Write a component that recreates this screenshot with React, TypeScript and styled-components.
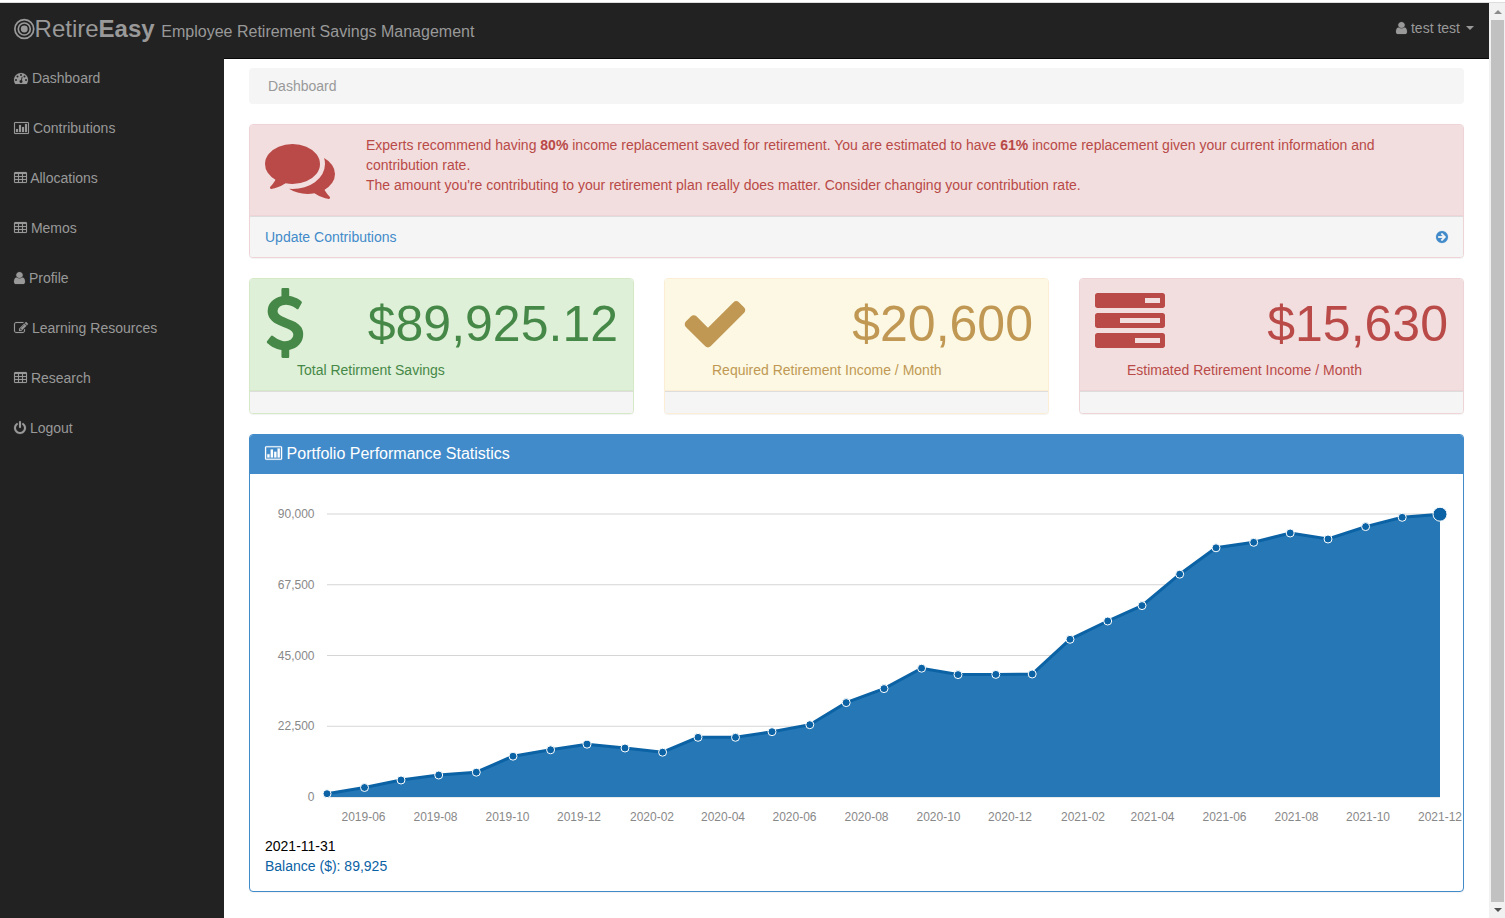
import React from 'react';
import styled, { createGlobalStyle, css } from 'styled-components';

const GlobalStyle = createGlobalStyle`
  *, *::before, *::after { box-sizing: border-box; }
  body {
    margin: 0;
    background: #fff;
    color: #333;
    font: 14px/20px "Liberation Sans", Arial, sans-serif;
  }
`;

/* ---------- icons: glyph outlines, y axis up, 1792 units per em ---------- */

type Glyph = { width: number; d: string; widen?: number };

const dot = (x: number, y: number) =>
  `M${x} ${y}q0 53 -37.5 90.5t-90.5 37.5t-90.5 -37.5t-37.5 -90.5t37.5 -90.5t90.5 -37.5t90.5 37.5t37.5 90.5z`;

const cell = (x: number, y: number) =>
  `M${x} ${y}v192q0 14 -9 23t-23 9h-320q-14 0 -23 -9t-9 -23v-192q0 -14 9 -23t23 -9h320q14 0 23 9t9 23z`;

const slab = (y: number) =>
  `M1792 ${y}v-256q0 -26 -19 -45t-45 -19h-1664q-26 0 -45 19t-19 45v256q0 26 19 45t45 19h1664q26 0 45 -19t19 -45z`;

const circle = (r: number) => `M${768 - r} 640a${r} ${r} 0 1 0 ${2 * r} 0a${r} ${r} 0 1 0 ${-2 * r} 0z`;

const glyphs: Record<string, Glyph> = {
  bullseye: { width: 1536, d: [256, 384, 512, 640, 768].map(circle).join('') },
  user: {
    width: 1408,
    widen: 1.1,
    d: 'M1280 137q0 -109 -62.5 -187t-150.5 -78h-854q-88 0 -150.5 78t-62.5 187q0 85 8.5 160.5t31.5 152t58.5 131t94 89t134.5 34.5q131 -128 313 -128t313 128q76 0 134.5 -34.5t94 -89t58.5 -131t31.5 -152t8.5 -160.5zM1024 1024q0 -159 -112.5 -271.5t-271.5 -112.5t-271.5 112.5t-112.5 271.5t112.5 271.5t271.5 112.5t271.5 -112.5t112.5 -271.5z',
  },
  gauge: {
    width: 1792,
    d:
      dot(384, 384) + dot(576, 832) + dot(1664, 384) + dot(1024, 1024) + dot(1472, 832) +
      'M1004 351l101 382q6 26 -7.5 48.5t-38.5 29.5t-48 -6.5t-30 -39.5l-101 -382q-60 -5 -107 -43.5t-63 -98.5q-20 -77 20 -146t117 -89t146 20t89 117q16 60 -6 117t-72 91z' +
      'M1792 384q0 -261 -141 -483q-19 -29 -54 -29h-1402q-35 0 -54 29q-141 221 -141 483q0 182 71 348t191 286t286 191t348 71t348 -71t286 -191t191 -286t71 -348z',
  },
  chart: {
    width: 1920,
    d: 'M512 512v-384h-256v384h256zM896 1024v-896h-256v896h256zM1280 768v-640h-256v640h256zM1664 1152v-1024h-256v1024h256zM1792 32v1216q0 13 -9.5 22.5t-22.5 9.5h-1600q-13 0 -22.5 -9.5t-9.5 -22.5v-1216q0 -13 9.5 -22.5t22.5 -9.5h1600q13 0 22.5 9.5t9.5 22.5zM1920 1248v-1216q0 -66 -47 -113t-113 -47h-1600q-66 0 -113 47t-47 113v1216q0 66 47 113t113 47h1600q66 0 113 -47t47 -113z',
  },
  table: {
    width: 1664,
    d:
      [512, 1024, 1536].flatMap((x) => [160, 544, 928].map((y) => cell(x, y))).join('') +
      'M1664 1248v-1088q0 -66 -47 -113t-113 -47h-1344q-66 0 -113 47t-47 113v1088q0 66 47 113t113 47h1344q66 0 113 -47t47 -113z',
  },
  edit: {
    width: 1792,
    d: 'M888 352l116 116l-152 152l-116 -116v-56h96v-96h56zM1328 1072q-16 16 -33 -1l-350 -350q-17 -17 -1 -33t33 1l350 350q17 17 1 33zM1408 478v-190q0 -119 -84.5 -203.5t-203.5 -84.5h-832q-119 0 -203.5 84.5t-84.5 203.5v832q0 119 84.5 203.5t203.5 84.5h832q63 0 117 -25q15 -7 18 -23q3 -17 -9 -29l-49 -49q-14 -14 -32 -8q-23 6 -45 6h-832q-66 0 -113 -47t-47 -113v-832q0 -66 47 -113t113 -47h832q66 0 113 47t47 113v126q0 13 9 22l64 64q15 15 35 7t20 -29zM1312 1216l288 -288l-672 -672h-288v288zM1756 1084l-92 -92l-288 288l92 92q28 28 68 28t68 -28l152 -152q28 -28 28 -68t-28 -68z',
  },
  power: {
    width: 1536,
    d: 'M1536 640q0 -156 -61 -298t-164 -245t-245 -164t-298 -61t-298 61t-245 164t-164 245t-61 298q0 182 80.5 343t226.5 270q43 32 95.5 25t83.5 -50q32 -42 24.5 -94.5t-49.5 -84.5q-98 -74 -151.5 -181t-53.5 -228q0 -104 40.5 -198.5t109.5 -163.5t163.5 -109.5t198.5 -40.5t198.5 40.5t163.5 109.5t109.5 163.5t40.5 198.5q0 121 -53.5 228t-151.5 181q-42 32 -49.5 84.5t24.5 94.5q31 43 84 50t95 -25q146 -109 226.5 -270t80.5 -343zM896 1408v-640q0 -52 -38 -90t-90 -38t-90 38t-38 90v640q0 52 38 90t90 38t90 -38t38 -90z',
  },
  comments: {
    width: 1792,
    d: 'M1408 768q0 -139 -94 -257t-256.5 -186.5t-353.5 -68.5q-86 0 -176 16q-124 -88 -278 -128q-36 -9 -86 -16h-3q-11 0 -20.5 8t-11.5 21q-1 3 -1 6.5t0.5 6.5t2 6l2.5 5t3.5 5.5t4 5t4.5 5t4 4.5q5 6 23 25t26 29.5t22.5 29t25 38.5t20.5 44q-124 72 -195 177t-71 224q0 139 94 257t256.5 186.5t353.5 68.5t353.5 -68.5t256.5 -186.5t94 -257zM1792 512q0 -120 -71 -224.5t-195 -176.5q10 -24 20.5 -44t25 -38.5t22.5 -29t26 -29.5t23 -25q1 -1 4 -4.5t4.5 -5t4 -5t3.5 -5.5l2.5 -5t2 -6t0.5 -6.5t-1 -6.5q-3 -14 -13 -22t-22 -7q-50 7 -86 16q-154 40 -278 128q-90 -16 -176 -16q-271 0 -472 132q58 -4 88 -4q161 0 309 45t264 129q125 92 192 212t67 254q0 77 -23 152q129 -71 204 -178t75 -230z',
  },
  dollar: {
    width: 1024,
    d: 'M978 351q0 -153 -99.5 -263.5t-258.5 -136.5v-175q0 -14 -9 -23t-23 -9h-135q-13 0 -22.5 9.5t-9.5 22.5v175q-66 9 -127.5 31t-101.5 44.5t-74 48t-46.5 37.5t-17.5 18q-17 21 -2 41l103 135q7 10 23 12q15 2 24 -9l2 -2q113 -99 243 -125q37 -8 74 -8q81 0 142.5 43t61.5 122q0 28 -15 53t-33.5 42t-58.5 37.5t-66 32t-80 32.5q-39 16 -61.5 25t-61.5 26.5t-62.5 31t-56.5 35.5t-53.5 42.5t-43.5 49t-35.5 58t-21 66.5t-8.5 78q0 138 98 242t255 134v180q0 13 9.5 22.5t22.5 9.5h135q14 0 23 -9t9 -23v-176q57 -6 110.5 -23t87 -33.5t63.5 -37.5t39 -29t15 -14q17 -18 5 -38l-81 -146q-8 -15 -23 -16q-14 -3 -27 7q-3 3 -14.5 12t-39 26.5t-58.5 32t-74.5 26t-85.5 11.5q-95 0 -155 -43t-60 -111q0 -26 8.5 -48t29.5 -41.5t39.5 -33t56 -31t60.5 -27t70 -27.5q53 -20 81 -31.5t76 -35t75.5 -42.5t62 -50t53 -63.5t31.5 -76.5t13 -94z',
  },
  check: {
    width: 1792,
    d: 'M1671 970q0 -40 -28 -68l-724 -724l-136 -136q-28 -28 -68 -28t-68 28l-136 136l-362 362q-28 28 -28 68t28 68l136 136q28 28 68 28t68 -28l294 -295l656 657q28 28 68 28t68 -28l136 -136q28 -28 28 -68z',
  },
  tasks: {
    width: 1792,
    d: 'M1024 128h640v128h-640v-128zM640 640h1024v128h-1024v-128zM1280 1152h384v128h-384v-128z' + slab(320) + slab(832) + slab(1344),
  },
  arrowRight: {
    width: 1536,
    d: 'M1285 640q0 27 -18 45l-91 91l-362 362q-18 18 -45 18t-45 -18l-91 -91q-18 -18 -18 -45t18 -45l189 -189h-502q-26 0 -45 -19t-19 -45v-128q0 -26 19 -45t45 -19h502l-189 -189q-19 -19 -19 -45t19 -45l91 -91q18 -18 45 -18t45 18l362 362l91 91q18 18 18 45zM1536 640q0 -209 -103 -385.5t-279.5 -279.5t-385.5 -103t-385.5 103t-279.5 279.5t-103 385.5t103 385.5t279.5 279.5t385.5 103t385.5 -103t279.5 -279.5t103 -385.5z',
  },
};

const IconSvg = styled.svg<{ $large?: boolean }>`
  height: 1em;
  fill: currentColor;
  stroke: currentColor;
  stroke-width: 20;
  overflow: visible;
  vertical-align: -0.143em;
  ${(p) => p.$large && css`
    display: block;
    height: 70px;
    flex: none;
    stroke: none;
  `}
`;

const Icon = ({ name, large }: { name: string; large?: boolean }) => {
  const { width, d, widen = 1 } = glyphs[name];
  return (
    <IconSvg $large={large} viewBox={`0 0 ${width} 1792`} aria-hidden="true">
      <path transform={`translate(0 ${large ? 1510 : 1536}) scale(${widen} -1)`} fillRule="evenodd" d={d} />
    </IconSvg>
  );
};

/* ---------- page frame ---------- */

const Window = styled.div`
  display: flex;
  min-height: 100vh;
  padding-top: 2px;
`;

const Page = styled.div`
  flex: 1;
  min-width: 0;
  display: flex;
  flex-direction: column;
  border-top: 1px solid #ddd;
`;

const Header = styled.header`
  display: flex;
  justify-content: space-between;
  height: 55px;
  padding: 0 15px 0 14px;
  background: #222;
  color: #999;
`;

const Brand = styled.a`
  padding-top: 14px;
  color: inherit;
  font-size: 24px;
  line-height: 24px;
  text-decoration: none;
  white-space: nowrap;

  ${IconSvg} {
    stroke: none;
    vertical-align: -4px;
  }
`;

const Tagline = styled.span`
  font-size: 16px;
`;

const UserMenu = styled.button`
  display: flex;
  align-items: center;
  gap: 4px;
  height: 50px;
  padding: 0;
  border: 0;
  background: none;
  color: inherit;
  font: inherit;
`;

const Caret = styled.span`
  margin-left: 2px;
  border: 4px solid transparent;
  border-top-color: currentColor;
  border-bottom: 0;
`;

const Columns = styled.div`
  flex: 1;
  display: flex;
  background: #222;
`;

const Sidebar = styled.nav`
  flex: none;
  display: flex;
  flex-direction: column;
  gap: 30px;
  width: 224px;
  padding: 10px 14px;
`;

const NavLink = styled.a`
  color: #999;
  text-decoration: none;
`;

const Main = styled.main`
  flex: 1;
  min-width: 0;
  padding: 9px 25px 0;
  border-top: 1px solid #080808;
  background: #fff;
`;

const Breadcrumb = styled.nav`
  margin-bottom: 20px;
  padding: 8px 19px;
  border-radius: 4px;
  background: #f5f5f5;
  color: #999;
`;

/* ---------- panels ---------- */

const tones = {
  danger: { text: '#b94a48', fill: '#f2dede', border: '#eed3d7' },
  success: { text: '#468847', fill: '#dff0d8', border: '#d6e9c6' },
  warning: { text: '#c09853', fill: '#fcf8e3', border: '#fbeed5' },
  primary: { text: '#fff', fill: '#428bca', border: '#428bca' },
};
type Tone = keyof typeof tones;

const Panel = styled.section<{ $tone: Tone }>`
  margin-bottom: 20px;
  border: 1px solid ${(p) => tones[p.$tone].border};
  border-radius: 4px;
  background: #fff;
  box-shadow: 0 1px 1px rgba(0, 0, 0, 0.05);
`;

const PanelHeading = styled.div<{ $tone: Tone }>`
  padding: 10px 15px;
  border-bottom: 1px solid ${(p) => tones[p.$tone].border};
  border-radius: 3px 3px 0 0;
  background: ${(p) => tones[p.$tone].fill};
  color: ${(p) => tones[p.$tone].text};
`;

const PanelFooter = styled.div`
  display: flex;
  justify-content: space-between;
  min-height: 22px;
  border-top: 1px solid #ddd;
  border-radius: 0 0 3px 3px;
  background: #f5f5f5;
`;

const FooterLink = styled.a`
  flex: 1;
  display: flex;
  justify-content: space-between;
  padding: 10px 15px;
  color: #428bca;
  text-decoration: none;
`;

const Advice = styled.div`
  display: grid;
  grid-template-columns: 86px 1fr;
  column-gap: 15px;
`;

const AdviceText = styled.p`
  margin: 0;
`;

const Stats = styled.div`
  display: grid;
  grid-template-columns: repeat(3, 1fr);
  column-gap: 30px;
`;

const StatTop = styled.div`
  display: flex;
  justify-content: space-between;
`;

const StatValue = styled.div`
  font-size: 50px;
  line-height: 71px;
`;

const StatLabel = styled.div`
  padding-left: 32px;
`;

const PanelTitle = styled.h3`
  margin: 0;
  font-size: 16px;
  font-weight: 400;
  line-height: 18px;
`;

const PanelBody = styled.div`
  padding: 15px;
`;

const ChartSvg = styled.svg`
  display: block;
  width: 100%;
  overflow: visible;
  font-size: 12px;
`;

const HoverDate = styled.div`
  color: #000;
`;

const HoverBalance = styled.div`
  color: #0b62a4;
`;

/* ---------- window scroll bar ---------- */

const ScrollBar = styled.div`
  flex: none;
  display: flex;
  flex-direction: column;
  align-items: center;
  width: 16px;
  padding: 1px 1px 0 2px;
  border-top: 1px solid #ddd;
  background: #f1f1f1;
`;

const ScrollThumb = styled.div`
  flex: 1;
  align-self: stretch;
  background: #c1c1c1;
`;

const ScrollArrow = styled.div<{ $down?: boolean }>`
  display: flex;
  align-items: center;
  justify-content: center;
  height: 16px;

  &::after {
    content: "";
    border: 4px solid transparent;
    ${(p) => p.$down
      ? css`border-top-color: #505050; border-bottom: 0;`
      : css`border-bottom-color: #8b8b8b; border-top: 0;`}
  }
`;

/* ---------- data ---------- */

const links = [
  { icon: 'gauge', label: 'Dashboard' },
  { icon: 'chart', label: 'Contributions' },
  { icon: 'table', label: 'Allocations' },
  { icon: 'table', label: 'Memos' },
  { icon: 'user', label: 'Profile' },
  { icon: 'edit', label: 'Learning Resources' },
  { icon: 'table', label: 'Research' },
  { icon: 'power', label: 'Logout' },
];

const stats: { tone: Tone; icon: string; value: string; label: string }[] = [
  { tone: 'success', icon: 'dollar', value: '$89,925.12', label: 'Total Retirment Savings' },
  { tone: 'warning', icon: 'check', value: '$20,600', label: 'Required Retirement Income / Month' },
  { tone: 'danger', icon: 'tasks', value: '$15,630', label: 'Estimated Retirement Income / Month' },
];

const yTicks: [string, number][] = [
  ['90,000', 25], ['67,500', 95.75], ['45,000', 166.5], ['22,500', 237.25], ['0', 308],
];

const xTicks: [string, number][] = [
  ['2019-06', 98.5], ['2019-08', 170.5], ['2019-10', 242.5], ['2019-12', 314], ['2020-02', 387],
  ['2020-04', 458], ['2020-06', 529.5], ['2020-08', 601.5], ['2020-10', 673.5], ['2020-12', 745],
  ['2021-02', 818], ['2021-04', 887.5], ['2021-06', 959.5], ['2021-08', 1031.5], ['2021-10', 1103],
  ['2021-12', 1175],
];

const points: [number, number][] = [
  [62, 304.7], [99.5, 298.5], [136, 291], [173.7, 286], [211.3, 283.2], [248, 267.2], [285.6, 260.8],
  [322, 255.2], [360, 259], [397.6, 263.2], [433, 248.3], [470.5, 248.3], [507, 242.7], [544.8, 235.7],
  [581.2, 213.6], [619, 199.6], [656.6, 179.2], [693, 185.6], [730.8, 185.4], [767.2, 185],
  [805, 150.3], [842.7, 132], [877, 116.6], [914.7, 85.2], [951, 58.8], [988.7, 53.3], [1025.2, 44],
  [1063, 50], [1100.6, 37.6], [1137.2, 28.3], [1175, 25.2],
];

const linePath = 'M' + points.map((p) => p.join(' ')).join('L');

const PerformanceChart = () => (
  <ChartSvg viewBox="0 0 1183 347" role="img" aria-label="Portfolio balance by month">
    {yTicks.map(([label, y]) => (
      <g key={label}>
        <text x="49.5" y={y + 4} textAnchor="end" fill="#888">{label}</text>
        <path d={`M62 ${y}H1175`} stroke="#aaa" strokeWidth="0.5" />
      </g>
    ))}
    {xTicks.map(([label, x]) => (
      <text key={label} x={x} y="332" textAnchor="middle" fill="#888">{label}</text>
    ))}
    <path d={`${linePath}V308H62Z`} fill="#2577b5" />
    <path d={linePath} fill="none" stroke="#0b62a4" strokeWidth="3" />
    {points.map(([x, y], i) => (
      <circle key={x} cx={x} cy={y} r={i === points.length - 1 ? 7 : 4} fill="#0b62a4" stroke="#fff" />
    ))}
  </ChartSvg>
);

export default function App() {
  return (
    <>
      <GlobalStyle />
      <Window>
        <Page>
          <Header>
            <Brand href="#">
              <Icon name="bullseye" />Retire<strong>Easy</strong> <Tagline>Employee Retirement Savings Management</Tagline>
            </Brand>
            <UserMenu type="button">
              <Icon name="user" />
              test test
              <Caret />
            </UserMenu>
          </Header>
          <Columns>
            <Sidebar>
              {links.map((link) => (
                <NavLink key={link.label} href="#">
                  <Icon name={link.icon} /> {link.label}
                </NavLink>
              ))}
            </Sidebar>
            <Main>
              <Breadcrumb aria-label="Breadcrumb">Dashboard</Breadcrumb>
              <Panel $tone="danger">
                <PanelHeading $tone="danger">
                  <Advice>
                    <Icon name="comments" large />
                    <AdviceText>
                      Experts recommend having <strong>80%</strong> income replacement saved for retirement. You are
                      estimated to have <strong>61%</strong> income replacement given your current information and
                      contribution rate.
                      <br />
                      The amount you're contributing to your retirement plan really does matter. Consider changing your
                      contribution rate.
                    </AdviceText>
                  </Advice>
                </PanelHeading>
                <PanelFooter>
                  <FooterLink href="#">
                    Update Contributions
                    <span><Icon name="arrowRight" /></span>
                  </FooterLink>
                </PanelFooter>
              </Panel>
              <Stats>
                {stats.map((stat) => (
                  <Panel key={stat.label} $tone={stat.tone}>
                    <PanelHeading $tone={stat.tone}>
                      <StatTop>
                        <Icon name={stat.icon} large />
                        <StatValue>{stat.value}</StatValue>
                      </StatTop>
                      <StatLabel>{stat.label}</StatLabel>
                    </PanelHeading>
                    <PanelFooter />
                  </Panel>
                ))}
              </Stats>
              <Panel $tone="primary">
                <PanelHeading $tone="primary">
                  <PanelTitle><Icon name="chart" /> Portfolio Performance Statistics</PanelTitle>
                </PanelHeading>
                <PanelBody>
                  <PerformanceChart />
                  <HoverDate>2021-11-31</HoverDate>
                  <HoverBalance>Balance ($): 89,925</HoverBalance>
                </PanelBody>
              </Panel>
            </Main>
          </Columns>
        </Page>
        <ScrollBar aria-hidden="true">
          <ScrollArrow />
          <ScrollThumb />
          <ScrollArrow $down />
        </ScrollBar>
      </Window>
    </>
  );
}
